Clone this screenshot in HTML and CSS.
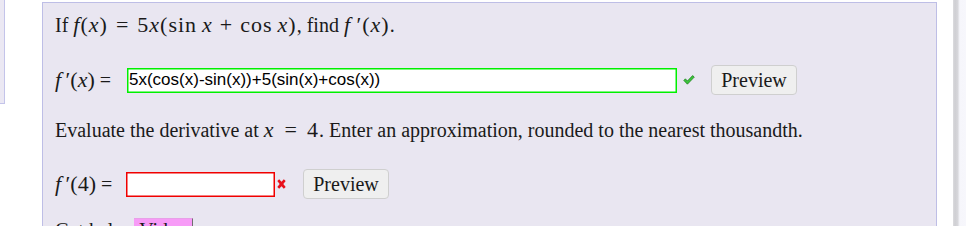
FILE: index.html
```html
<!DOCTYPE html>
<html>
<head>
<meta charset="utf-8">
<link rel="stylesheet" href="styles.css">
</head>
<body>
<div class="page">
  <div class="stub"></div>
  <div class="problem">
    <p class="row text-row first">If <span class="m"><i>f</i>(<i>x</i>)<span class="op">=</span>5<i>x</i>(sin<span class="th"></span><i>x</i><span class="op2">+</span>cos<span class="th"></span><i>x</i>)</span>, find <span class="m"><i>f</i>&#8201;′(<i>x</i>)</span>.</p>
    <div class="row answer-row r2">
      <span class="label"><span class="m"><i>f</i>&#8201;′(<i>x</i>)</span> =</span>
      <input class="ans correct" type="text" value="5x(cos(x)-sin(x))+5(sin(x)+cos(x))">
      <svg class="mark check" width="12" height="10" viewBox="0 0 12 10"><path d="M0.8 5.4 L4.4 9.2 L11.3 2.1 L9.6 0.6 L4.4 6 L2.4 3.8 Z" fill="#3cc43c" stroke="#157a15" stroke-width="0.7" stroke-linejoin="round"/></svg>
      <button class="preview">Preview</button>
    </div>
    <p class="row text-row r3">Evaluate the derivative at <span class="m"><i>x</i><span class="op op3">=</span>4</span>. Enter an approximation, rounded to the nearest thousandth.</p>
    <div class="row answer-row r4">
      <span class="label l2"><span class="m"><i>f</i>&#8201;′(4)</span> =</span>
      <input class="ans wrong" type="text" value="">
      <svg class="mark cross" width="9" height="10" viewBox="0 0 9 10"><path d="M0.3 1.9 L2.2 0.2 L4.5 2.7 L6.8 0.2 L8.7 1.9 L6.3 5 L8.7 8.1 L6.8 9.8 L4.5 7.3 L2.2 9.8 L0.3 8.1 L2.7 5 Z" fill="#e8101c"/></svg>
      <button class="preview">Preview</button>
    </div>
    <div class="row help-row">
      <span class="help-label">Get help:</span>
      <button class="video">Video</button>
    </div>
  </div>
  <div class="scroll"></div>
</div>
</body>
</html>
```

FILE: styles.css
```css
html, body {
  margin: 0;
  padding: 0;
  background: #ffffff;
  overflow: hidden;
}
body {
  width: 966px;
  height: 226px;
  font-family: "Liberation Serif", "Times New Roman", serif;
  font-size: 20px;
  color: #1a1a1a;
}
.page {
  display: flex;
  align-items: flex-start;
  height: 226px;
  overflow: hidden;
}
.stub {
  width: 4px;
  height: 103px;
  background: #ebe8f3;
  border-right: 1px solid #c4c4ea;
  border-bottom: 1px solid #c4c4ea;
  flex: none;
}
.problem {
  margin-left: 37px;
  margin-top: 2px;
  width: 881px;
  height: 250px;
  background: #e9e6f1;
  border: 1px solid #bebee6;
  padding: 0 0 0 12px;
  flex: none;
}
.scroll {
  margin-left: 16px;
  width: 13px;
  height: 226px;
  flex: none;
  background: linear-gradient(to right, #dcdcdf 0px, #cfcfd3 2px, #d8d8dc 5px, #eeeef3 6px, #f6f6fb 7px, #f7f7fc 13px);
}
.row {
  margin: 0;
}
.text-row {
  line-height: 22px;
  height: 22px;
  white-space: nowrap;
}
.first {
  margin-top: 11px;
}
.m {
  font-family: "Liberation Serif", "Times New Roman", serif;
  font-size: 22px;
  line-height: 20px;
  letter-spacing: 1px;
}
.m i {
  font-style: italic;
}
.th {
  display: inline-block;
  width: 5px;
}
.op {
  padding: 0 8px;
}
.op3 {
  padding: 0 9px 0 10px;
}
.op2 {
  padding: 0 7px;
}
.answer-row {
  display: flex;
  align-items: center;
  height: 30px;
}
.r2 {
  margin-top: 29px;
}
.r3 {
  margin-top: 24px;
}
.r4 {
  margin-top: 28px;
}
.label {
  white-space: nowrap;
  width: 72px;
  flex: none;
}
.label .m {
  letter-spacing: 0;
}
.l2 {
  width: 71px;
}
.ans {
  box-sizing: border-box;
  height: 25px;
  margin: 0;
  padding: 0 1px;
  background: #ffffff;
  font-family: "Liberation Sans", Arial, sans-serif;
  font-size: 17px;
  color: #000;
  outline: none;
}
.correct {
  width: 550px;
  border: 1px solid #00f000;
  box-shadow: inset 0 0 0 0.5px #00f000;
}
.wrong {
  width: 149px;
  border: 1px solid #f00000;
  box-shadow: inset 0 0 0 0.5px #f00000;
}
.mark {
  flex: none;
}
.check {
  margin-left: 6px;
  margin-right: 16px;
}
.cross {
  margin-left: 2px;
  margin-right: 17px;
}
.preview {
  box-sizing: border-box;
  height: 30px;
  width: 86px;
  padding: 0;
  margin: 0;
  font-family: "Liberation Serif", "Times New Roman", serif;
  font-size: 20px;
  color: #1a1a1a;
  background: #efefef;
  border: 1px solid #cfcfcf;
  border-radius: 4px;
}
.help-row {
  margin-top: 19px;
  display: flex;
  align-items: flex-start;
  height: 30px;
}
.help-label {
  padding-top: 1px;
  line-height: 22px;
  width: 79px;
  flex: none;
}
.video {
  box-sizing: border-box;
  width: 59px;
  height: 28px;
  margin: 0;
  padding: 0;
  font-family: "Liberation Serif", "Times New Roman", serif;
  font-size: 20px;
  line-height: 22px;
  color: #1a1a1a;
  background: #f79bf7;
  border: none;
  border-right: 1px solid #707070;
  border-top: 1px solid #e8a0e8;
  border-radius: 0;
  text-align: center;
  display: flex;
  align-items: flex-start;
  justify-content: center;
}
```
